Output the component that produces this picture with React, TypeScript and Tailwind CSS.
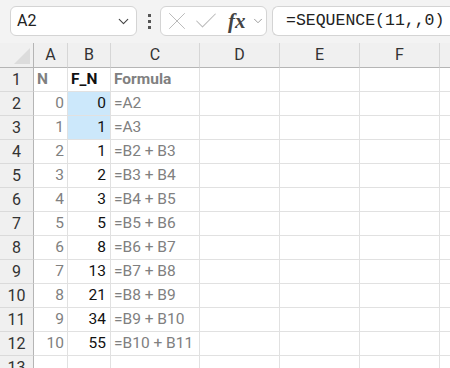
import { ChevronDown, X, Check } from "lucide-react";

const cols = [
  { key: "A", w: "w-[34px]" },
  { key: "B", w: "w-[43px]" },
  { key: "C", w: "w-[89px]" },
  { key: "D", w: "w-[80px]" },
  { key: "E", w: "w-[80px]" },
  { key: "F", w: "w-[80px]" },
];

const rows = [
  { n: "N", f: "F_N", c: "Formula", head: true },
  { n: "0", f: "0", c: "=A2", sel: true },
  { n: "1", f: "1", c: "=A3", sel: true },
  { n: "2", f: "1", c: "=B2 + B3" },
  { n: "3", f: "2", c: "=B3 + B4" },
  { n: "4", f: "3", c: "=B4 + B5" },
  { n: "5", f: "5", c: "=B5 + B6" },
  { n: "6", f: "8", c: "=B6 + B7" },
  { n: "7", f: "13", c: "=B7 + B8" },
  { n: "8", f: "21", c: "=B8 + B9" },
  { n: "9", f: "34", c: "=B9 + B10" },
  { n: "10", f: "55", c: "=B10 + B11" },
  { n: "", f: "", c: "" },
];

const cell = "h-[24px] shrink-0 border-r border-b border-[#e1e1e1] flex items-center";

function FormulaBar() {
  return (
    <div className="flex h-[43px] items-start bg-[#f3f3f3] pt-[6px]">
      <div className="ml-[10px] flex h-[30px] w-[127px] items-center rounded-[6px] border border-[#d4d4d4] bg-white pl-[6px] pr-[4px]">
        <span className="flex-1 text-[16px] text-[#222]">A2</span>
        <ChevronDown size={17} strokeWidth={1.6} className="text-[#444]" />
      </div>
      <div className="ml-[11px] mr-[9px] flex h-[30px] flex-col items-center justify-center gap-[3px]">
        <div className="h-[3px] w-[3px] bg-[#555]" />
        <div className="h-[3px] w-[3px] bg-[#555]" />
        <div className="h-[3px] w-[3px] bg-[#555]" />
      </div>
      <div className="flex h-[30px] w-[107px] items-center rounded-[6px] border border-[#d4d4d4] bg-white pl-[1px]">
        <X size={30} strokeWidth={0.8} className="text-[#bbb]" />
        <Check size={28} strokeWidth={0.9} className="ml-[0px] text-[#bbb]" />
        <span className="ml-[8px] font-['Liberation_Serif',serif] text-[21px] italic font-bold leading-none text-[#444]">fx</span>
        <ChevronDown size={14} strokeWidth={1.4} className="ml-[5px] text-[#888]" />
      </div>
      <div className="ml-[5px] flex h-[30px] flex-1 items-center rounded-l-[6px] border border-r-0 border-[#d4d4d4] bg-white pl-[13px]">
        <span className="font-['Liberation_Mono',monospace] text-[16.5px] whitespace-nowrap text-[#222]">=SEQUENCE(11,,0)</span>
      </div>
    </div>
  );
}

export default function App() {
  return (
    <div className="h-[368px] w-[450px] overflow-hidden bg-white font-['Roboto',sans-serif]">
      <FormulaBar />
      <div className="flex bg-[#f0f0f0]">
        <div className="relative h-[25px] w-[34px] shrink-0 border-r border-b border-[#b5b5b5]">
          <svg className="absolute right-[3px] bottom-[3px]" width="16" height="16" viewBox="0 0 16 16">
            <polygon points="16,0 16,16 0,16" fill="#dcdcdc" />
          </svg>
        </div>
        {cols.map((c) => (
          <div
            key={c.key}
            className={`${c.w} flex h-[25px] shrink-0 items-center justify-center border-r border-b border-r-[#d6d6d6] border-b-[#b5b5b5] text-[16px] text-[#333]`}
          >
            {c.key}
          </div>
        ))}
        <div className="h-[25px] flex-1 border-b border-[#b5b5b5]" />
      </div>
      {rows.map((r, i) => (
        <div key={i} className="flex">
          <div className="flex h-[24px] w-[34px] shrink-0 items-center justify-center border-r border-b border-r-[#b5b5b5] border-b-[#dadada] bg-[#f0f0f0] text-[16px] text-[#333]">
            {i + 1}
          </div>
          <div
            className={`${cell} w-[34px] text-[15.5px] text-[#808080] ${
              r.head ? "justify-start pl-[3px] font-bold" : "justify-end pr-[3px]"
            }`}
          >
            {r.n}
          </div>
          <div
            className={`${cell} w-[43px] text-[15.5px] text-[#111] ${r.sel ? "bg-[#cce8fb]" : ""} ${
              r.head ? "justify-start pl-[3px] font-bold" : "justify-end pr-[4px]"
            }`}
          >
            {r.f}
          </div>
          <div
            className={`${cell} w-[89px] whitespace-nowrap pl-[3px] text-[15.5px] text-[#808080] ${r.head ? "font-bold" : ""}`}
          >
            {r.c}
          </div>
          <div className={`${cell} w-[80px]`} />
          <div className={`${cell} w-[80px]`} />
          <div className={`${cell} w-[80px]`} />
          <div className="h-[24px] flex-1 border-b border-[#e1e1e1]" />
        </div>
      ))}
    </div>
  );
}
